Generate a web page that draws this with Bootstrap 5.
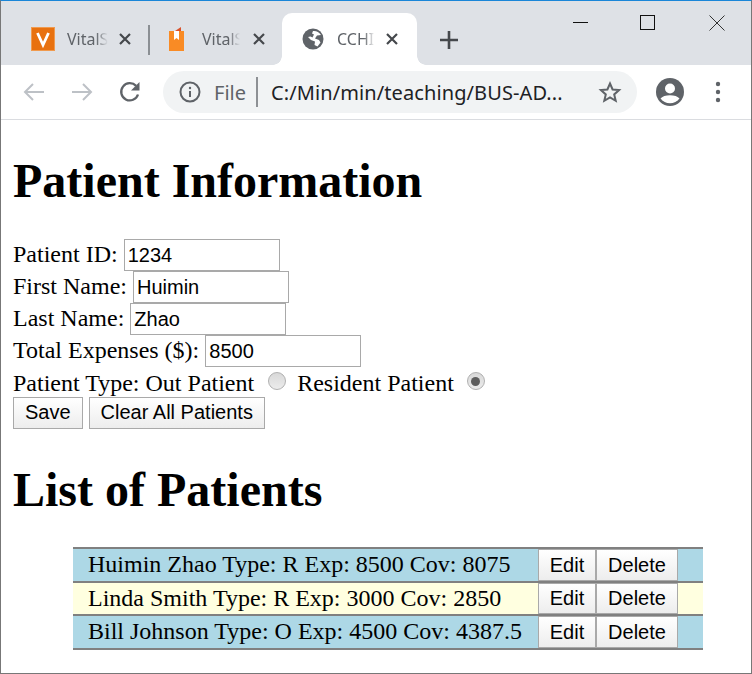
<!DOCTYPE html>
<html lang="en">
<head>
<meta charset="utf-8">
<title>CCHI</title>
<link rel="stylesheet" href="https://cdn.jsdelivr.net/npm/bootstrap@5.3.0/dist/css/bootstrap.min.css">
<style>
html,body{height:100%;margin:0;background:#fff;}
body{font-family:"Liberation Serif",serif;color:#000;overflow:hidden;}
.win-frame{height:674px;width:752px;border:1px solid #777;border-top:1px solid #1a86d8;display:flex;flex-direction:column;overflow:hidden;}
.tab-strip{height:64px;background:#dee1e6;flex:none;padding-left:11px;}
.tab-a{height:52px;margin-top:12px;font:16px "Noto Sans",sans-serif;color:#5f6368;flex:none;}
.tab-one{width:136px;padding-left:19px;}
.tab-two{width:134px;padding-left:21px;}
.tab-on{width:135px;background:#fff;border-radius:10px 10px 0 0;padding-left:20px;color:#5f6368;position:relative;}
.tab-on::before,.tab-on::after{content:"";position:absolute;bottom:0;width:9px;height:9px;}
.tab-on::before{left:-9px;background:radial-gradient(circle at 0 0,#dee1e6 8.5px,#fff 9px);}
.tab-on::after{right:-9px;background:radial-gradient(circle at 100% 0,#dee1e6 8.5px,#fff 9px);}
.tab-label{white-space:nowrap;font-family:"Noto Sans",sans-serif;-webkit-mask-image:linear-gradient(90deg,#000 70%,transparent);mask-image:linear-gradient(90deg,#000 70%,transparent);}
.lbl-a{width:41px;margin-left:12px;}
.lbl-b{width:38px;margin-left:17px;}
.lbl-c{width:38px;margin-left:13px;}
.tab-x{margin-left:auto;margin-right:16px;flex:none;}
.tab-on .tab-x{margin-right:18px;}
.tab-sep{width:2px;height:30px;background:#8b8f94;flex:none;margin-right:-2px;margin-top:24px;}
.new-tab{margin-left:22px;margin-top:29px;flex:none;}
.win-btns{margin-left:auto;}
.win-cell{width:68px;height:44px;display:flex;align-items:center;justify-content:center;}
.win-cell-mid{padding-right:2px;}
.tool-bar{height:55px;flex:none;border-bottom:1px solid #dadce0;background:#fff;padding-left:21px;}
.back-g{margin-left:24px;}
.omni{width:474px;height:42px;margin-left:21px;background:#f1f3f4;border-radius:21px;padding-left:16px;font:20px "Noto Sans",sans-serif;flex:none;margin-top:0;}
.omni-file{color:#5f6368;margin-left:13px;}
.omni-sep{width:2px;height:30px;background:#8d9094;margin:0 13px 0 10px;}
.omni-url{color:#202124;font-size:20px;white-space:nowrap;letter-spacing:.1px;}
.omni-star{margin-left:auto;margin-right:15px;}
.avatar-g{margin-left:19px;flex:none;}
.menu-dots{margin-left:31px;flex:none;}
.page-body{padding:0 12px;flex:1;min-height:0;}
.page-h{font:bold 48px/55px "Liberation Serif",serif;margin:33px 0 31px;color:#000;}
.page-h2{margin:33px 0 30px;}
.f-row{font-size:24px;line-height:30px;height:32px;white-space:nowrap;display:flex;align-items:flex-start;}
.f-row-r{height:30px;line-height:32px;}
.f-in{width:156px;height:32px;border:1px solid #a9a9a9;padding:1px 3px;margin-left:6px;font:20px/28px "Liberation Sans",sans-serif;color:#000;background:#fff;border-radius:0;outline:0;}
.f-radio{width:18px;height:18px;border-radius:50%;border:1px solid #b0b0b0;background:linear-gradient(#d8d8d8,#ececec);display:inline-flex;align-items:center;justify-content:center;flex:none;}
.f-radio i{width:9px;height:9px;border-radius:50%;background:#5e5e5e;display:block;}
.r-1{margin:5px 11px 0 14px;}
.r-2{margin:5px 0 0 13px;}
.g-btn{font:20px/1 "Liberation Sans",sans-serif;color:#000;height:32px;border:1px solid #a9a9a9;border-radius:0;background:linear-gradient(#fff,#ededed);padding:0 11px 2px;}
.g-gap{margin-left:6px;}
.plist{margin:0 36px 0 60px;border-bottom:2px solid #808080;font-size:24px;}
.prow{height:33.6px;border-top:2px solid #808080;display:flex;align-items:flex-start;padding-left:15px;white-space:nowrap;line-height:30px;}
.prow-blue{background:#add8e6;}
.prow-yel{background:#ffffe0;}
.p-txt{width:450px;flex:none;}
.p-btn{font:20px/1 "Liberation Sans",sans-serif;color:#000;height:31.6px;border:1px solid #a9a9a9;border-radius:0;background:linear-gradient(#fff,#ededed);padding:0;flex:none;}
.p-edit{width:58px;}
.p-del{width:82px;}
</style>
</head>
<body>
<div class="win-frame">
  <div class="tab-strip d-flex align-items-start">
    <div class="tab-a tab-one d-flex align-items-center">
      <svg width="24" height="24" viewBox="0 0 24 24"><rect width="24" height="24" fill="#e8710f"/><rect x=".5" y=".5" width="23" height="23" fill="none" stroke="#f09a4e"/><path d="M6.500 6l5.500 12 5.500-12" fill="none" stroke="#fff" stroke-width="2.800"/></svg>
      <span class="tab-label lbl-a">VitalS</span>
      <svg class="tab-x" width="14" height="14" viewBox="0 0 14 14"><path d="M2 2l10 10M12 2L2 12" stroke="#45484c" stroke-width="2.200"/></svg>
    </div>
    <div class="tab-sep"></div>
    <div class="tab-a tab-two d-flex align-items-center">
      <svg width="16" height="24" viewBox="0 0 16 24"><rect y="4" width="15" height="20" fill="#f98b25"/><path d="M6 4l6-4v4z" fill="#d9522c"/><path d="M5 4h5v9l-2.500-2L5 13z" fill="#fff"/></svg>
      <span class="tab-label lbl-b">VitalS</span>
      <svg class="tab-x" width="14" height="14" viewBox="0 0 14 14"><path d="M2 2l10 10M12 2L2 12" stroke="#45484c" stroke-width="2.200"/></svg>
    </div>
    <div class="tab-a tab-on d-flex align-items-center">
      <svg width="22" height="22" viewBox="0 0 22 22"><circle cx="11" cy="11" r="10.500" fill="#5f6368"/><path d="M11 3c3-.5 6 1 8 4l-4 .5-2 3 4 1.500 1.500 2.500-3 4-3-1.500 .5-3.500-4-1.500-3-3 2.500-.5 2 1 1.500-3-2-1z" fill="#fff"/></svg>
      <span class="tab-label lbl-c">CCHI</span>
      <svg class="tab-x" width="14" height="14" viewBox="0 0 14 14"><path d="M2 2l10 10M12 2L2 12" stroke="#45484c" stroke-width="2.200"/></svg>
    </div>
    <svg class="new-tab" width="20" height="20" viewBox="0 0 20 20"><path d="M10 1v18M1 10h18" stroke="#45484c" stroke-width="2.600"/></svg>
    <div class="win-btns d-flex">
      <div class="win-cell"><svg width="16" height="16" viewBox="0 0 16 16"><path d="M0 7.500h15" stroke="#111" stroke-width="1"/></svg></div>
      <div class="win-cell win-cell-mid"><svg width="16" height="16" viewBox="0 0 16 16"><rect x=".5" y=".5" width="14" height="14" fill="none" stroke="#111"/></svg></div>
      <div class="win-cell"><svg width="16" height="16" viewBox="0 0 16 16"><path d="M.5.5l15 15M15.500.5l-15 15" stroke="#333" stroke-width="1"/></svg></div>
    </div>
  </div>
  <div class="tool-bar d-flex align-items-center">
    <svg width="24" height="24" viewBox="0 0 24 24"><path d="M22 12H3M11 4l-8 8 8 8" fill="none" stroke="#bdc1c6" stroke-width="2"/></svg>
    <svg class="back-g" width="24" height="24" viewBox="0 0 24 24"><path d="M2 12h19M13 4l8 8-8 8" fill="none" stroke="#bdc1c6" stroke-width="2"/></svg>
    <svg class="back-g" width="24" height="24" viewBox="0 0 24 24"><path d="M20 14.500a8.600 8.600 0 1 1-1.900-8.600" fill="none" stroke="#5f6368" stroke-width="2.300"/><path d="M21.500 2v8.500H13z" fill="#5f6368"/></svg>
    <div class="omni d-flex align-items-center">
      <svg width="22" height="22" viewBox="0 0 22 22"><circle cx="11" cy="11" r="9.500" fill="none" stroke="#5f6368" stroke-width="2"/><path d="M11 10v6" stroke="#5f6368" stroke-width="2"/><circle cx="11" cy="7" r="1.200" fill="#5f6368"/></svg>
      <span class="omni-file">File</span>
      <span class="omni-sep"></span>
      <span class="omni-url">C:/Min/min/teaching/BUS-AD...</span>
      <svg class="omni-star" width="24" height="24" viewBox="0 0 24 24"><path d="M12 3.500l2.600 6 6.500.6-4.900 4.300 1.500 6.400L12 17.400l-5.700 3.400 1.500-6.400-4.900-4.300 6.500-.6z" fill="none" stroke="#5f6368" stroke-width="2"/></svg>
    </div>
    <svg class="avatar-g" width="28" height="28" viewBox="0 0 28 28"><circle cx="14" cy="14" r="14" fill="#5f6368"/><circle cx="14" cy="10.500" r="5" fill="#fff"/><path d="M4.500 20.500c3-4.500 16-4.500 19 0a12 12 0 0 1-19 0z" fill="#fff"/></svg>
    <svg class="menu-dots" width="6" height="22" viewBox="0 0 6 22"><circle cx="3" cy="3" r="2.200" fill="#5f6368"/><circle cx="3" cy="11" r="2.200" fill="#5f6368"/><circle cx="3" cy="19" r="2.200" fill="#5f6368"/></svg>
  </div>
  <div class="page-body">
    <h1 class="page-h">Patient Information</h1>
    <form>
      <div class="f-row"><label>Patient ID:</label><input class="f-in" type="text" value="1234"></div>
      <div class="f-row"><label>First Name:</label><input class="f-in" type="text" value="Huimin"></div>
      <div class="f-row"><label>Last Name:</label><input class="f-in" type="text" value="Zhao"></div>
      <div class="f-row"><label>Total Expenses ($):</label><input class="f-in" type="text" value="8500"></div>
      <div class="f-row f-row-r"><span>Patient Type: Out Patient</span><span class="f-radio r-1"></span><span>Resident Patient</span><span class="f-radio r-2"><i></i></span></div>
      <div class="f-row"><button type="button" class="g-btn">Save</button><button type="button" class="g-btn g-gap">Clear All Patients</button></div>
    </form>
    <h1 class="page-h page-h2">List of Patients</h1>
    <div class="plist">
      <div class="prow prow-blue"><span class="p-txt">Huimin Zhao Type: R Exp: 8500 Cov: 8075</span><button type="button" class="p-btn p-edit">Edit</button><button type="button" class="p-btn p-del">Delete</button></div>
      <div class="prow prow-yel"><span class="p-txt">Linda Smith Type: R Exp: 3000 Cov: 2850</span><button type="button" class="p-btn p-edit">Edit</button><button type="button" class="p-btn p-del">Delete</button></div>
      <div class="prow prow-blue"><span class="p-txt">Bill Johnson Type: O Exp: 4500 Cov: 4387.5</span><button type="button" class="p-btn p-edit">Edit</button><button type="button" class="p-btn p-del">Delete</button></div>
    </div>
  </div>
</div>
<script src="https://cdn.jsdelivr.net/npm/bootstrap@5.3.0/dist/js/bootstrap.bundle.min.js"></script>
</body>
</html>
